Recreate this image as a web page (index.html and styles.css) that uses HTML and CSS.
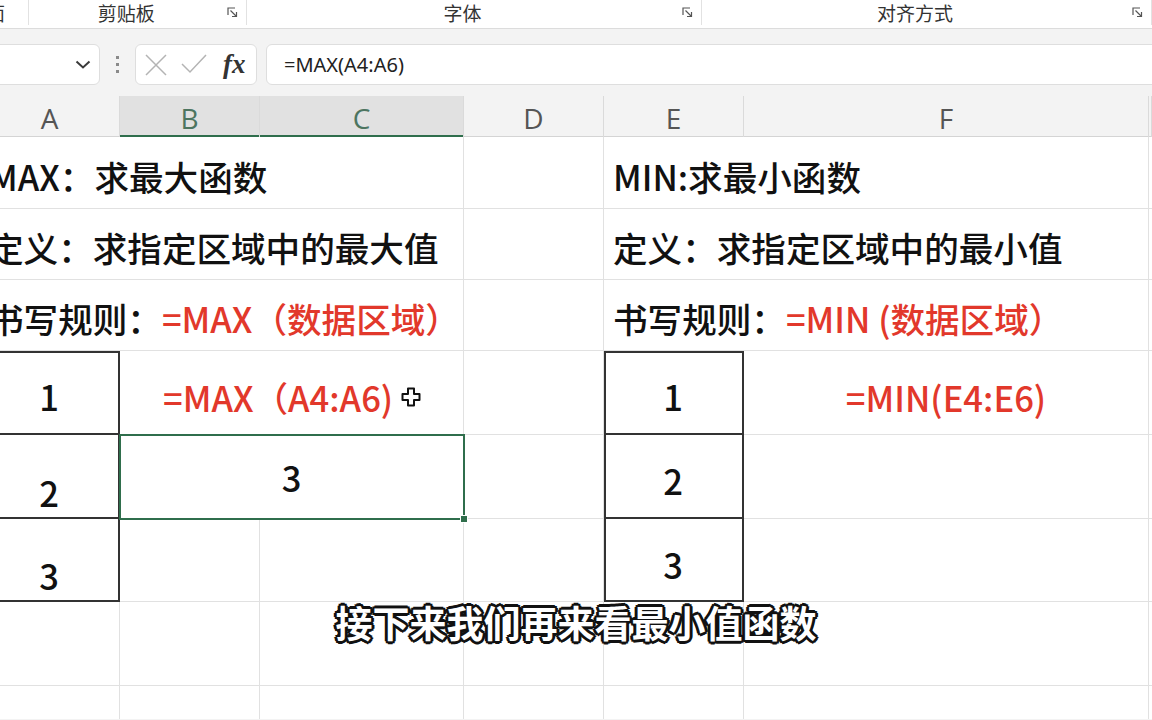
FILE: index.html
```html
<!DOCTYPE html>
<html lang="zh-CN">
<head>
    <meta charset="UTF-8">
    <title>MAX / MIN 函数</title>
    <link rel="stylesheet" href="styles.css">
</head>
<body>
    <div class="ribbon">
        <div class="grp grp-0"><span class="grp-label">面</span></div>
        <div class="grp grp-1">
            <span class="grp-label">剪贴板</span>
            <svg class="launcher" width="11" height="11" viewBox="0 0 11 11"><path d="M1 8V1h7M3.5 3.5l6 6M9.5 5v4.5H5" fill="none" stroke="#555" stroke-width="1.2"/></svg>
        </div>
        <div class="grp grp-2">
            <span class="grp-label">字体</span>
            <svg class="launcher" width="11" height="11" viewBox="0 0 11 11"><path d="M1 8V1h7M3.5 3.5l6 6M9.5 5v4.5H5" fill="none" stroke="#555" stroke-width="1.2"/></svg>
        </div>
        <div class="grp grp-3">
            <span class="grp-label">对齐方式</span>
            <svg class="launcher" width="11" height="11" viewBox="0 0 11 11"><path d="M1 8V1h7M3.5 3.5l6 6M9.5 5v4.5H5" fill="none" stroke="#555" stroke-width="1.2"/></svg>
        </div>
    </div>

    <div class="fbar">
        <div class="namebox">
            <svg width="16" height="9" viewBox="0 0 16 9"><path d="M1.5 1.5l6.5 6 6.5-6" fill="none" stroke="#3a3a3a" stroke-width="2"/></svg>
        </div>
        <div class="grip"><i></i><i></i><i></i></div>
        <div class="fxbox">
            <svg width="22" height="22" viewBox="0 0 22 22"><path d="M1 1l20 20M21 1L1 21" stroke="#b4b4b4" stroke-width="1.5"/></svg>
            <svg class="tick" width="26" height="20" viewBox="0 0 26 20"><path d="M1 10l8 8L25 1" fill="none" stroke="#b4b4b4" stroke-width="1.5"/></svg>
            <span class="fx">fx</span>
        </div>
        <div class="finput">=MAX(A4:A6)</div>
    </div>

    <div class="sheet">
        <div class="colhead">
            <div class="h">A</div>
            <div class="h on">B</div>
            <div class="h on">C</div>
            <div class="h">D</div>
            <div class="h">E</div>
            <div class="h">F</div>
            <div class="h"></div>
        </div>

        <div class="grid">
            <!-- 1 -->
            <div class="c s3 txt">MAX：求最大函数</div>
            <div class="c"></div>
            <div class="c s2 txt">MIN:求最小函数</div>
            <div class="c"></div>
            <!-- 2 -->
            <div class="c s3 txt">定义：求指定区域中的最大值</div>
            <div class="c"></div>
            <div class="c s2 txt">定义：求指定区域中的最小值</div>
            <div class="c"></div>
            <!-- 3 -->
            <div class="c s3 txt">书写规则：<span class="red">=MAX（数据区域）</span></div>
            <div class="c"></div>
            <div class="c s2 txt">书写规则：<span class="red">=MIN (数据区域）</span></div>
            <div class="c"></div>
            <!-- 4 -->
            <div class="c tb top num">1</div>
            <div class="c s2 red formula">=MAX（A4:A6)
                <svg class="cursor" width="20" height="20" viewBox="0 0 20 20"><path d="M7 1.5h6v5.5h5.5v6H13v5.5H7V13H1.5V7H7z" fill="#fff" stroke="#111" stroke-width="2" stroke-linejoin="round"/></svg>
            </div>
            <div class="c"></div>
            <div class="c tb top left num">1</div>
            <div class="c red center">=MIN(E4:E6)</div>
            <div class="c"></div>
            <!-- 5 -->
            <div class="c tb num low">2</div>
            <div class="c s2 sel num">3</div>
            <div class="c"></div>
            <div class="c tb left num">2</div>
            <div class="c"></div>
            <div class="c"></div>
            <!-- 6 -->
            <div class="c tb num low">3</div>
            <div class="c"></div>
            <div class="c"></div>
            <div class="c"></div>
            <div class="c tb left num">3</div>
            <div class="c"></div>
            <div class="c"></div>
            <!-- 7 -->
            <div class="c"></div><div class="c"></div><div class="c"></div><div class="c"></div>
            <div class="c"></div><div class="c"></div><div class="c"></div>
            <!-- 8 -->
            <div class="c"></div><div class="c"></div><div class="c"></div><div class="c"></div>
            <div class="c"></div><div class="c"></div><div class="c"></div>
        </div>

        <div class="subtitle">接下来我们再来看最小值函数</div>
    </div>
</body>
</html>
```

FILE: styles.css
```css
body {
    margin: 0;
    width: 1152px;
    height: 720px;
    overflow: hidden;
    background: #f3f3f3;
    font-family: "Noto Sans CJK SC", "Noto Sans", sans-serif;
}

/* ribbon group labels */
.ribbon {
    height: 28px;
    display: flex;
    background: #fff;
    border-bottom: 1px solid #dcdcdc;
}

.grp {
    display: flex;
    align-items: center;
    border-right: 1px solid #e2e2e2;
    margin: 0 0 3px;
}

.grp-label {
    flex: 1;
    text-align: center;
    font-size: 19px;
    color: #333;
    white-space: nowrap;
}

.grp-0 {
    width: 29px;
    overflow: hidden;
}

.grp-0 .grp-label {
    flex: none;
    margin-left: -14px;
}

.grp-1 { width: 222px; }
.grp-2 { width: 465px; }
.grp-3 { width: 460px; }

.launcher {
    margin: 0 8px 0 4px;
}

/* formula bar */
.fbar {
    display: flex;
    align-items: center;
    padding: 15px 0 11px;
}

.namebox,
.fxbox,
.finput {
    height: 41px;
    box-sizing: border-box;
    background: #fff;
    border: 1px solid #dedede;
    border-radius: 6px;
    display: flex;
    align-items: center;
}

.namebox {
    width: 110px;
    margin-left: -10px;
    justify-content: flex-end;
    padding-right: 8px;
}

.grip {
    width: 35px;
    display: flex;
    flex-direction: column;
    align-items: center;
    gap: 4px;
}

.grip i {
    width: 3px;
    height: 3px;
    background: #8a8a8a;
}

.fxbox {
    width: 122px;
    padding-left: 9px;
    gap: 14px;
}

.tick {
    margin-top: -2px;
}

.fx {
    font-family: "Liberation Serif", serif;
    font-style: italic;
    font-weight: bold;
    font-size: 27px;
    color: #333;
    margin-left: 2px;
    line-height: 1;
}

.finput {
    flex: 1;
    margin-left: 9px;
    margin-right: -10px;
    padding-left: 17px;
    font-family: "Noto Sans", sans-serif;
    font-size: 20px;
    color: #222;
}

/* sheet */
.sheet {
    position: relative;
    margin-left: -20px;
    height: 623px;
    overflow: hidden;
}

.colhead,
.grid {
    display: grid;
    grid-template-columns: 140px 140px 204px 140px 140px 405px 1fr;
}

.colhead {
    height: 41px;
    border-bottom: 1px solid #d4d4d4;
    box-sizing: border-box;
}

.h {
    display: flex;
    align-items: center;
    justify-content: center;
    padding-top: 3px;
    border-right: 1px solid #dadada;
    font-family: "Open Sans", sans-serif;
    font-size: 28px;
    color: #555;
}

.h.on {
    background: #e1e1e1;
    color: #4d7560;
    box-shadow: inset 0 -2px 0 #2f6e4c;
}

.grid {
    background: #fff;
    grid-template-rows: 72px 71px 71px 84px 84px 83px 84px 84px;
}

.c {
    box-sizing: border-box;
    border-right: 1px solid #e1e1e1;
    border-bottom: 1px solid #e1e1e1;
    display: flex;
    align-items: center;
    padding: 0 9px;
    white-space: nowrap;
    font-size: 34.6px;
    font-weight: 500;
    color: #111;
}

.s2 { grid-column: span 2; }
.s3 { grid-column: span 3; }

.txt {
    padding-top: 6px;
}

.red {
    color: #e2382b;
}

.num {
    justify-content: center;
    padding-top: 8px;
}

.low {
    align-items: flex-end;
    padding-bottom: 0;
}

.center {
    justify-content: center;
    padding-top: 8px;
}

.formula {
    position: relative;
    padding-left: 43px;
    padding-top: 8px;
}

.cursor {
    position: absolute;
    left: 281px;
    top: 36px;
}

/* black bordered data tables */
.tb {
    border-right: 2px solid #333;
    border-bottom: 2px solid #333;
}

.tb.top {
    box-shadow: inset 0 2px 0 #333;
}

.tb.left {
    box-shadow: inset 2px 0 0 #333;
}

.tb.top.left {
    box-shadow: inset 0 2px 0 #333, inset 2px 0 0 #333;
}

.sel {
    position: relative;
    outline: 2px solid #2f6e4c;
    outline-offset: -1px;
    padding-top: 0;
}

.sel::after {
    content: "";
    position: absolute;
    right: -5px;
    bottom: -5px;
    width: 6px;
    height: 6px;
    background: #2f6e4c;
    border: 1px solid #fff;
}

.subtitle {
    position: absolute;
    left: 20px;
    right: 0;
    top: 503px;
    text-align: center;
    font-size: 37px;
    font-weight: bold;
    line-height: 46px;
    color: #fff;
    text-shadow:
        2px 0 0 #111, -2px 0 0 #111, 0 2px 0 #111, 0 -2px 0 #111,
        2px 2px 0 #111, -2px -2px 0 #111, 2px -2px 0 #111, -2px 2px 0 #111,
        3px 0 0 #111, -3px 0 0 #111, 0 3px 0 #111, 0 -3px 0 #111;
}
```
